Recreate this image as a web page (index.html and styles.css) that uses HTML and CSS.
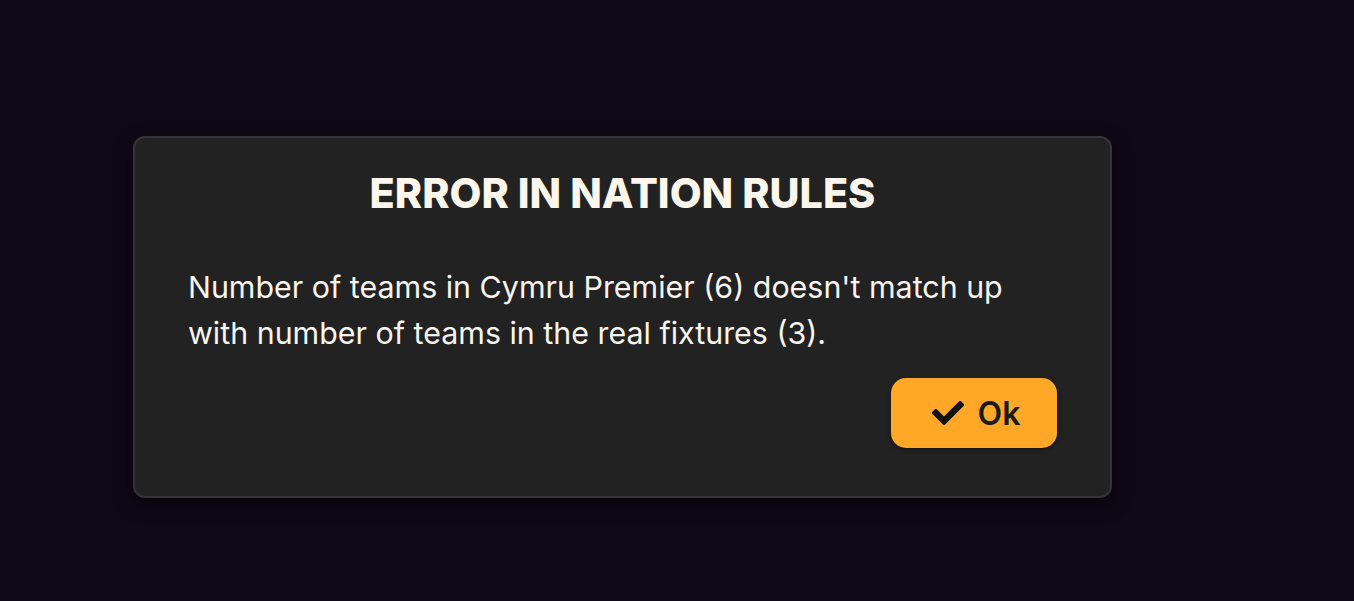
FILE: index.html
```html
<!DOCTYPE html>
<html>
<head>
<meta charset="utf-8">
<link rel="stylesheet" href="styles.css">
</head>
<body>
<div class="stage">
  <div class="dialog">
    <h1 class="title">ERROR IN NATION RULES</h1>
    <p class="message">Number of teams in Cymru Premier (6) doesn't match up with number of teams in the real fixtures (3).</p>
    <div class="actions">
      <button class="ok">
        <svg class="check" viewBox="0 0 512 512" width="32" height="32"><path d="M173.9 439.4l-166.4-166.4c-10-10-10-26.2 0-36.2l36.2-36.2c10-10 26.2-10 36.2 0L192 312.7 432.1 72.6c10-10 26.2-10 36.2 0l36.2 36.2c10 10 10 26.2 0 36.2l-294.4 294.4c-10 10-26.2 10-36.2 0z" fill="#111"/></svg>
        <span>Ok</span>
      </button>
    </div>
  </div>
</div>
</body>
</html>
```

FILE: styles.css
```css
html, body {
  margin: 0;
  padding: 0;
  background: #0f0917;
  height: 100%;
}
.stage {
  padding: 136px 0 0 133px;
}
.dialog {
  box-sizing: border-box;
  width: 979px;
  height: 362px;
  background: #222222;
  border: 2px solid #363338;
  border-radius: 12px;
  padding: 32px 53px 0 53px;
  box-shadow: 0 6px 18px rgba(0,0,0,0.5);
  font-family: Inter, "Noto Sans", sans-serif;
  color: #fdf6ec;
}
.title {
  margin: 0;
  text-align: center;
  font-size: 41.3px;
  font-weight: 800;
  line-height: 46px;
  letter-spacing: 0;
}
.message {
  margin: 48px 0 0 0;
  font-size: 30.4px;
  line-height: 46px;
  font-weight: 400;
  color: #f8f4ef;
  max-width: 840px;
}
.actions {
  display: flex;
  justify-content: flex-end;
  margin-top: 22px;
}
.ok {
  display: flex;
  align-items: center;
  justify-content: center;
  gap: 14px;
  width: 166px;
  height: 70px;
  background: #ffa726;
  border: none;
  border-radius: 15px;
  font-family: Inter, "Noto Sans", sans-serif;
  font-size: 32px;
  font-weight: 600;
  color: #1b1b1b;
  padding: 0 0 0 4px;
  box-shadow: 0 2px 4px rgba(0,0,0,0.35);
}
.check {
  display: block;
}
```
